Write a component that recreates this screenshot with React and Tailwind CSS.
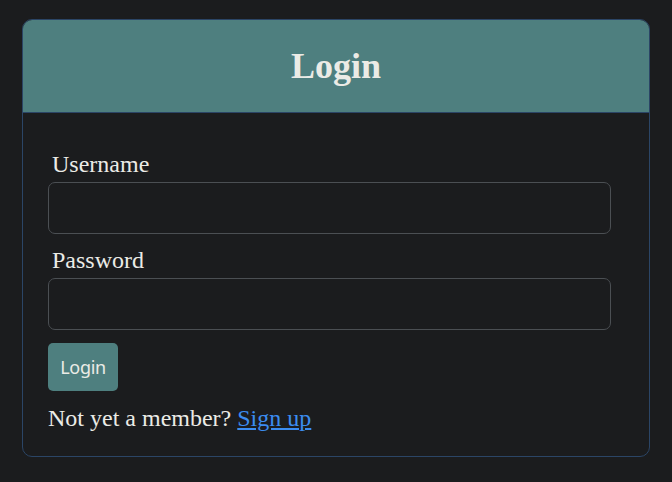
export default function App() {
  return (
    <div className="min-h-[482px] w-full bg-[#1b1c1e] pt-[19px]" style={{ fontFamily: '"Liberation Serif", "Times New Roman", serif' }}>
      <div className="mx-[22px] rounded-[10px] border border-[#2b4566] bg-[#1b1c1e] overflow-hidden">
        <div className="h-[93px] flex items-center justify-center bg-[#4e7f7f] border-b border-[#2b4566]">
          <h1 className="text-[36px] font-bold text-[#ebebe6] leading-[41px]">Login</h1>
        </div>
        <div className="pl-[25px] pt-[37px] pb-[24px]">
          <label className="block pl-[4px] text-[24px] leading-[28px] text-[#ebebe6]">Username</label>
          <input type="text" className="mt-[4px] block w-[563px] h-[52px] rounded-[7px] border border-[#4b4f53] bg-[#1b1c1e] outline-none" />
          <label className="block mt-[12px] pl-[4px] text-[24px] leading-[28px] text-[#ebebe6]">Password</label>
          <input type="password" className="mt-[4px] block w-[563px] h-[52px] rounded-[7px] border border-[#4b4f53] bg-[#1b1c1e] outline-none" />
          <button className="mt-[13px] w-[70px] h-[48px] rounded-[5px] bg-[#4e7f7f] text-[18px] tracking-[-0.3px] text-[#ebebe6]" style={{ fontFamily: '"Noto Sans", "Open Sans", sans-serif' }}>Login</button>
          <p className="mt-[13px] text-[24px] leading-[28px] text-[#ebebe6]">
            Not yet a member? <a href="#" className="text-[#3b8cf0] underline">Sign up</a>
          </p>
        </div>
      </div>
    </div>
  );
}
